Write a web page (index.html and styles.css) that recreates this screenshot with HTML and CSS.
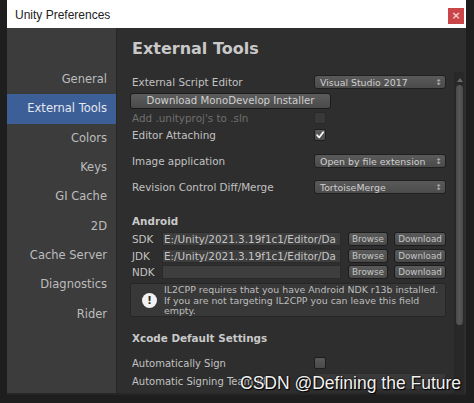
FILE: index.html
```html
<!DOCTYPE html>
<html>
<head>
<meta charset="utf-8">
<link rel="stylesheet" href="styles.css">
</head>
<body>
<div class="screen">
  <div class="window">
    <div class="titlebar">
      <span class="title">Unity Preferences</span>
      <div class="close">&#215;</div>
    </div>
    <div class="body">
      <nav class="sidebar">
        <div class="nav-item">General</div>
        <div class="nav-item active">External Tools</div>
        <div class="nav-item">Colors</div>
        <div class="nav-item">Keys</div>
        <div class="nav-item">GI Cache</div>
        <div class="nav-item">2D</div>
        <div class="nav-item">Cache Server</div>
        <div class="nav-item">Diagnostics</div>
        <div class="nav-item">Rider</div>
      </nav>
      <main class="content">
        <h1 class="heading">External Tools</h1>

        <div class="row r-editor">
          <span class="label">External Script Editor</span>
          <div class="dropdown"><span>Visual Studio 2017</span><span class="arrows">&#8597;</span></div>
        </div>

        <div class="wide-btn">Download MonoDevelop Installer</div>

        <div class="row r-check r-add">
          <span class="label disabled">Add .unityproj's to .sln</span>
          <div class="checkbox off"></div>
        </div>

        <div class="row r-check r-attach">
          <span class="label">Editor Attaching</span>
          <div class="checkbox"><svg viewBox="0 0 12 12" width="12" height="12"><path d="M2.5 6.2 L5 9 L9.8 2.6" fill="none" stroke="#fff" stroke-width="2" stroke-linecap="round" stroke-linejoin="round"/></svg></div>
        </div>

        <div class="row r-image">
          <span class="label">Image application</span>
          <div class="dropdown"><span>Open by file extension</span><span class="arrows">&#8597;</span></div>
        </div>

        <div class="row r-rev">
          <span class="label">Revision Control Diff/Merge</span>
          <div class="dropdown"><span>TortoiseMerge</span><span class="arrows">&#8597;</span></div>
        </div>

        <div class="section r-android">Android</div>

        <div class="sdk-row r-sdk">
          <span class="sdk-label">SDK</span>
          <div class="path">E:/Unity/2021.3.19f1c1/Editor/Da</div>
          <div class="small-btn browse">Browse</div>
          <div class="small-btn download">Download</div>
        </div>
        <div class="sdk-row r-jdk">
          <span class="sdk-label">JDK</span>
          <div class="path">E:/Unity/2021.3.19f1c1/Editor/Da</div>
          <div class="small-btn browse">Browse</div>
          <div class="small-btn download">Download</div>
        </div>
        <div class="sdk-row r-ndk">
          <span class="sdk-label">NDK</span>
          <div class="path"></div>
          <div class="small-btn browse">Browse</div>
          <div class="small-btn download">Download</div>
        </div>

        <div class="helpbox">
          <div class="help-icon">!</div>
          <p class="help-text">IL2CPP requires that you have Android NDK r13b installed.<br>If you are not targeting IL2CPP you can leave this field<br>empty.</p>
        </div>

        <div class="section r-xcode">Xcode Default Settings</div>

        <div class="row r-check r-sign">
          <span class="label small">Automatically Sign</span>
          <div class="checkbox off2"></div>
        </div>
        <div class="row r-team">
          <span class="label small">Automatic Signing Team Id</span>
          <div class="textfield"></div>
        </div>
      </main>
      <div class="scrollbar">
        <div class="sb-arrow"></div>
        <div class="sb-thumb"></div>
      </div>
    </div>
  </div>
  <div class="watermark">CSDN @Defining the Future</div>
</div>
</body>
</html>
```

FILE: styles.css
```css
* { box-sizing: border-box; }
html, body { margin: 0; padding: 0; }
body { background: #1d1d1d; font-family: "DejaVu Sans", Verdana, sans-serif; }

.screen {
  position: relative;
  width: 474px;
  height: 403px;
  background: #1e1e1e;
  padding: 0 8px 8px 7px;
  overflow: hidden;
}

.window {
  width: 459px;
  height: 395px;
  display: flex;
  flex-direction: column;
}

.titlebar {
  height: 28px;
  background: #ffffff;
  display: flex;
  align-items: center;
  justify-content: space-between;
  padding: 0 2px 0 8px;
}
.title {
  font-family: "Liberation Sans", Arial, sans-serif;
  font-size: 12px;
  color: #222;
  margin-top: 2px;
}
.close {
  width: 16px;
  height: 16px;
  background: #c94548;
  color: #f4d0d0;
  font-family: "DejaVu Sans", sans-serif;
  font-size: 11px;
  font-weight: bold;
  line-height: 16px;
  text-align: center;
  margin-top: 4px;
}

.body {
  flex: 1;
  display: flex;
  background: #2e2e2e;
  border-bottom: 2px solid #262626;
}

.sidebar {
  width: 110px;
  background: #3c3c3c;
  border-right: 1px solid #262626;
  padding-top: 37px;
}
.nav-item {
  height: 29.33px;
  line-height: 29.33px;
  text-align: right;
  padding-right: 9px;
  font-size: 11.5px;
  color: #bdbdbd;
}
.nav-item.active {
  background: #3d5f97;
  color: #e4e8f0;
}

.content {
  width: 337px;
  padding-left: 15px;
  padding-right: 8px;
  color: #c2c2c2;
  font-size: 10.4px;
}

.heading {
  margin: 10px 0 0 0;
  font-size: 16px;
  font-weight: bold;
  line-height: 22px;
  color: #c9c9c9;
}

.row {
  display: flex;
  align-items: center;
  height: 16px;
}
.label {
  flex: 0 0 182px;
  white-space: nowrap;
  color: #c2c2c2;
}
.label.disabled { color: #6f6f6f; }
.label.small { font-size: 10px; }

.r-editor { height: 18px; margin-top: 13px; }
.r-add { margin-top: 1px; }
.r-attach { margin-top: 1px; }
.r-image { height: 18px; margin-top: 9px; }
.r-rev { height: 18px; margin-top: 8px; }

.dropdown {
  width: 132px;
  height: 14px;
  border: 1px solid #202020;
  border-radius: 3px;
  background: linear-gradient(#5a5a5a, #4b4b4b);
  display: flex;
  align-items: center;
  justify-content: space-between;
  padding: 0 3px 0 5px;
  font-size: 9.4px;
  color: #cfcfcf;
  white-space: nowrap;
}
.arrows {
  font-size: 8px;
  color: #bbb;
}

.wide-btn {
  margin: 2px 0 0 -2px;
  width: 201px;
  height: 16px;
  border: 1px solid #1c1c1c;
  border-radius: 3px;
  background: linear-gradient(#5c5c5c, #4a4a4a);
  text-align: center;
  line-height: 14px;
  font-size: 10.2px;
  color: #cfcfcf;
  white-space: nowrap;
}

.checkbox {
  width: 12px;
  height: 12px;
  border-radius: 2px;
  border: 1px solid #1e1e1e;
  background: linear-gradient(#5d5d5d, #4c4c4c);
  display: flex;
  align-items: center;
  justify-content: center;
}
.checkbox svg { display: block; }
.checkbox.off {
  background: #393939;
  border-color: #2a2a2a;
}
.checkbox.off2 {
  background: linear-gradient(#585858, #4a4a4a);
}

.section {
  font-weight: bold;
  font-size: 10.4px;
  height: 16px;
  line-height: 16px;
  color: #c9c9c9;
}
.r-android { margin-top: 17px; }
.r-xcode { margin-top: 13px; }

.sdk-row {
  display: flex;
  align-items: center;
  height: 16px;
}
.r-sdk { margin-top: 2px; }
.r-jdk { margin-top: 1px; }
.sdk-label {
  flex: 0 0 30px;
  color: #c2c2c2;
}
.path {
  width: 179px;
  height: 14px;
  background: #3e3e3e;
  border: 1px solid #2a2a2a;
  padding-left: 1px;
  line-height: 12px;
  overflow: hidden;
  white-space: nowrap;
  color: #c6c6c6;
  font-size: 10.4px;
}
.small-btn {
  height: 14px;
  border: 1px solid #1c1c1c;
  border-radius: 3px;
  background: linear-gradient(#5a5a5a, #4a4a4a);
  text-align: center;
  line-height: 12px;
  font-size: 8.8px;
  color: #c4c4c4;
  white-space: nowrap;
  overflow: hidden;
}
.browse { width: 40px; margin-left: 7px; }
.download { width: 52px; margin-left: 6px; }

.helpbox {
  margin: 3px 0 0 -2px;
  width: 316px;
  height: 34px;
  background: #383838;
  border: 1px solid #262626;
  border-radius: 2px;
  display: flex;
  align-items: flex-start;
}
.help-icon {
  width: 15px;
  height: 15px;
  border-radius: 50%;
  background: #f2f2f2;
  color: #2e2e2e;
  font-weight: bold;
  font-size: 11px;
  line-height: 15px;
  text-align: center;
  margin: 9px 0 0 11px;
  flex: 0 0 15px;
}
.help-text {
  margin: 1px 0 0 7px;
  font-size: 9.4px;
  line-height: 10.5px;
  color: #bdbdbd;
  white-space: nowrap;
}

.r-sign { margin-top: 9px; }
.r-team { margin-top: 2px; }
.textfield {
  width: 133px;
  height: 17px;
  background: #3a3a3a;
  border: 1px solid #2c2c2c;
}

.scrollbar {
  width: 10px;
  margin-top: 44px;
  background: #282828;
  border-left: 1px solid #262626;
  display: flex;
  flex-direction: column;
  align-items: center;
}
.sb-arrow {
  width: 0;
  height: 0;
  margin-top: 6px;
  border-left: 3px solid transparent;
  border-right: 3px solid transparent;
  border-bottom: 4px solid #6a6a6a;
}
.sb-thumb {
  width: 7px;
  height: 240px;
  margin-top: 3px;
  border-radius: 4px;
  background: linear-gradient(90deg, #4a4a4a, #575757, #4a4a4a);
}

.watermark {
  position: absolute;
  left: 240px;
  top: 372px;
  font-family: "Liberation Sans", Arial, sans-serif;
  font-size: 17.5px;
  line-height: 22px;
  color: #f2f2f2;
  white-space: nowrap;
  text-shadow: 0 0 2px #000, 1px 1px 1px #000;
}
```
